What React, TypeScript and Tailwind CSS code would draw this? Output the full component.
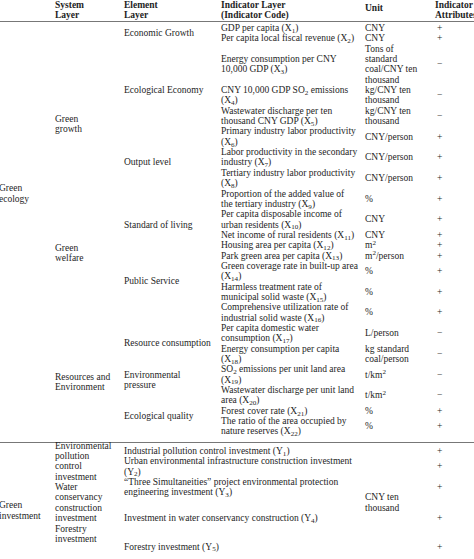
import React from "react";

function C({ className, children }: { className: string; children: React.ReactNode }) {
  return (
    <div className={`flex flex-col justify-center whitespace-nowrap ${className}`}>
      <div>{children}</div>
    </div>
  );
}

type Row = { r: string; ind: React.ReactNode; unit: React.ReactNode; s: string };

const rows: Row[] = [
  { r: "row-[1/3]", ind: <>GDP per capita (X<sub>1</sub>)</>, unit: "CNY", s: "+" },
  { r: "row-[3/5]", ind: <>Per capita local fiscal revenue (X<sub>2</sub>)</>, unit: "CNY", s: "+" },
  {
    r: "row-[5/13]",
    ind: <>Energy consumption per CNY<br />10,000 GDP (X<sub>3</sub>)</>,
    unit: <>Tons of<br />standard<br />coal/CNY ten<br />thousand</>,
    s: "−",
  },
  {
    r: "row-[13/17]",
    ind: <>CNY 10,000 GDP SO<sub>2</sub> emissions<br />(X<sub>4</sub>)</>,
    unit: <>kg/CNY ten<br />thousand</>,
    s: "−",
  },
  {
    r: "row-[17/21]",
    ind: <>Wastewater discharge per ten<br />thousand CNY GDP (X<sub>5</sub>)</>,
    unit: <>kg/CNY ten<br />thousand</>,
    s: "−",
  },
  { r: "row-[21/25]", ind: <>Primary industry labor productivity<br />(X<sub>6</sub>)</>, unit: "CNY/person", s: "+" },
  { r: "row-[25/29]", ind: <>Labor productivity in the secondary<br />industry (X<sub>7</sub>)</>, unit: "CNY/person", s: "+" },
  { r: "row-[29/33]", ind: <>Tertiary industry labor productivity<br />(X<sub>8</sub>)</>, unit: "CNY/person", s: "+" },
  { r: "row-[33/37]", ind: <>Proportion of the added value of<br />the tertiary industry (X<sub>9</sub>)</>, unit: "%", s: "+" },
  { r: "row-[37/41]", ind: <>Per capita disposable income of<br />urban residents (X<sub>10</sub>)</>, unit: "CNY", s: "+" },
  { r: "row-[41/43]", ind: <>Net income of rural residents (X<sub>11</sub>)</>, unit: "CNY", s: "+" },
  { r: "row-[43/45]", ind: <>Housing area per capita (X<sub>12</sub>)</>, unit: <>m<sup>2</sup></>, s: "+" },
  { r: "row-[45/47]", ind: <>Park green area per capita (X<sub>13</sub>)</>, unit: <>m<sup>2</sup>/person</>, s: "+" },
  { r: "row-[47/51]", ind: <>Green coverage rate in built-up area<br />(X<sub>14</sub>)</>, unit: "%", s: "+" },
  { r: "row-[51/55]", ind: <>Harmless treatment rate of<br />municipal solid waste (X<sub>15</sub>)</>, unit: "%", s: "+" },
  { r: "row-[55/59]", ind: <>Comprehensive utilization rate of<br />industrial solid waste (X<sub>16</sub>)</>, unit: "%", s: "+" },
  { r: "row-[59/63]", ind: <>Per capita domestic water<br />consumption (X<sub>17</sub>)</>, unit: "L/person", s: "−" },
  {
    r: "row-[63/67]",
    ind: <>Energy consumption per capita<br />(X<sub>18</sub>)</>,
    unit: <>kg standard<br />coal/person</>,
    s: "−",
  },
  { r: "row-[67/71]", ind: <>SO<sub>2</sub> emissions per unit land area<br />(X<sub>19</sub>)</>, unit: <>t/km<sup>2</sup></>, s: "−" },
  { r: "row-[71/75]", ind: <>Wastewater discharge per unit land<br />area (X<sub>20</sub>)</>, unit: <>t/km<sup>2</sup></>, s: "−" },
  { r: "row-[75/77]", ind: <>Forest cover rate (X<sub>21</sub>)</>, unit: "%", s: "+" },
  { r: "row-[77/81]", ind: <>The ratio of the area occupied by<br />nature reserves (X<sub>22</sub>)</>, unit: "%", s: "+" },
];

const elements: { r: string; t: React.ReactNode }[] = [
  { r: "row-[1/5]", t: "Economic Growth" },
  { r: "row-[7/21]", t: "Ecological Economy" },
  { r: "row-[21/35]", t: "Output level" },
  { r: "row-[33/47]", t: "Standard of living" },
  { r: "row-[47/55]", t: "Public Service" },
  { r: "row-[59/67]", t: "Resource consumption" },
  { r: "row-[67/73]", t: <>Environmental<br />pressure</> },
  { r: "row-[75/79]", t: "Ecological quality" },
];

const bottom: { r: string; t: React.ReactNode }[] = [
  { r: "row-[2/4]", t: <>Industrial pollution control investment (Y<sub>1</sub>)</> },
  { r: "row-[5/7]", t: <>Urban environmental infrastructure construction investment<br />(Y<sub>2</sub>)</> },
  { r: "row-[9/11]", t: <>“Three Simultaneities” project environmental protection<br />engineering investment (Y<sub>3</sub>)</> },
  { r: "row-[15/17]", t: <>Investment in water conservancy construction (Y<sub>4</sub>)</> },
  { r: "row-[20/23]", t: <>Forestry investment (Y<sub>5</sub>)</> },
];

export default function App() {
  return (
    <div className="w-[474px] h-[559px] overflow-hidden bg-white text-[#1e1e1e] font-['Liberation_Serif','Times_New_Roman',serif] text-[9.5px] leading-[10.35px]">
      <div className="ml-[-1px] w-[560px]">
        {/* header */}
        <div className="h-[21px] grid grid-cols-[56px_69px_97px_144px_70px_90px] font-bold">
          <div />
          <div className="whitespace-nowrap">System<br />Layer</div>
          <div className="whitespace-nowrap">Element<br />Layer</div>
          <div className="whitespace-nowrap">Indicator Layer<br />(Indicator Code)</div>
          <div className="mt-[3px] whitespace-nowrap">Unit</div>
          <div className="whitespace-nowrap">Indicator<br />Attributes</div>
        </div>
        <div className="h-px bg-[#777]" />
        {/* top body */}
        <div className="mt-px grid grid-cols-[56px_69px_97px_144px_70px_90px] grid-rows-[repeat(80,5.175px)]">
          <C className="col-start-1 row-[1/67]">Green<br />ecology</C>
          <C className="col-start-2 row-[1/40]">Green<br />growth</C>
          <C className="col-start-2 row-[33/58]">Green<br />welfare</C>
          <C className="col-start-2 row-[60/81]">Resources and<br />Environment</C>
          {elements.map((e, i) => (
            <C key={"e" + i} className={`col-start-3 ${e.r}`}>{e.t}</C>
          ))}
          {rows.map((x, i) => (
            <React.Fragment key={"r" + i}>
              <C className={`col-start-4 ${x.r}`}>{x.ind}</C>
              <C className={`col-start-5 ${x.r}`}>{x.unit}</C>
              <C className={`col-start-6 pl-[2px] ${x.r}`}>{x.s}</C>
            </React.Fragment>
          ))}
        </div>
        <div className="mt-[5px] h-px bg-[#777]" />
        {/* bottom body */}
        <div className="-mt-[2px] grid grid-cols-[56px_69px_97px_144px_70px_90px] grid-rows-[repeat(24,5.175px)]">
          <C className="col-start-1 row-[5/24]">Green<br />investment</C>
          <C className="col-start-2 row-[1/9]">Environmental<br />pollution<br />control<br />investment</C>
          <C className="col-start-2 row-[9/17]">Water<br />conservancy<br />construction<br />investment</C>
          <C className="col-start-2 row-[17/21]">Forestry<br />investment</C>
          {bottom.map((b, i) => (
            <React.Fragment key={"b" + i}>
              <C className={`col-[3/5] ${b.r}`}>{b.t}</C>
              <C className={`col-start-6 pl-[2px] ${b.r}`}>+</C>
            </React.Fragment>
          ))}
          <C className="col-start-5 row-[1/25]">CNY ten<br />thousand</C>
        </div>
      </div>
    </div>
  );
}
